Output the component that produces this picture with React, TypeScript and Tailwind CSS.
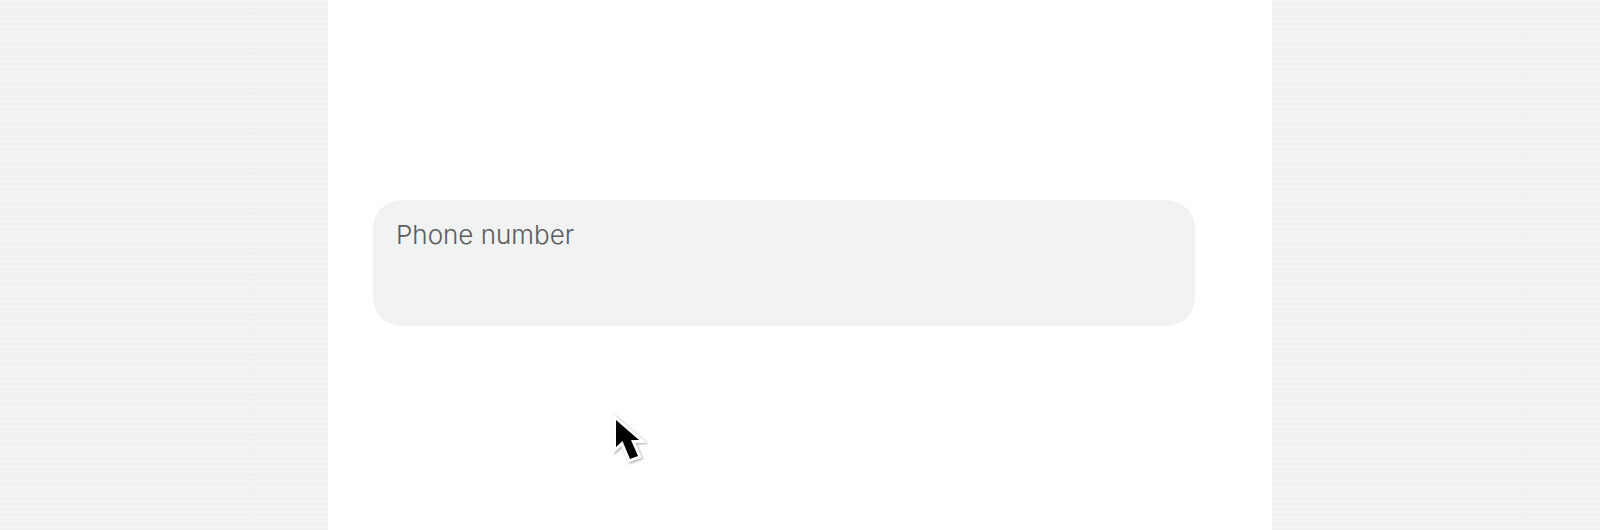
const arrow = "M6 8 L6 35 L12.5 29 L20 47 L28 44 L21 28 L29 28 Z";

const Cursor = () => (
	<svg
		className="absolute left-[610px] top-[412px]"
		width="38"
		height="54"
		viewBox="0 0 38 54"
		fill="none"
	>
		<path
			d={arrow}
			stroke="#fff"
			strokeWidth="6"
			strokeLinejoin="miter"
			style={{ filter: "drop-shadow(1px 1px 1px rgba(0,0,0,0.35))" }}
		/>
		<path d={arrow} fill="#000" />
	</svg>
);

const Side = () => (
	<div className="w-[328px] shrink-0 bg-[#f2f3f2] bg-[repeating-linear-gradient(0deg,rgba(0,0,0,0.012)_0px,rgba(0,0,0,0.012)_2px,transparent_2px,transparent_5px)]" />
);

export default function App() {
	return (
		<main className="relative flex h-[530px] w-full overflow-hidden bg-white font-['Inter',sans-serif]">
			<Side />
			<section className="flex-1 bg-white pl-[44.5px] pr-[77px] pt-[200px]">
				<div className="h-[126px] rounded-[28px] bg-[#f0f3f2] pl-[23.5px] pt-[19px]">
					<p className="text-[26px] font-light leading-[32px] text-[#5c5c5c]">Phone number</p>
				</div>
			</section>
			<Side />
			<Cursor />
		</main>
	);
}
